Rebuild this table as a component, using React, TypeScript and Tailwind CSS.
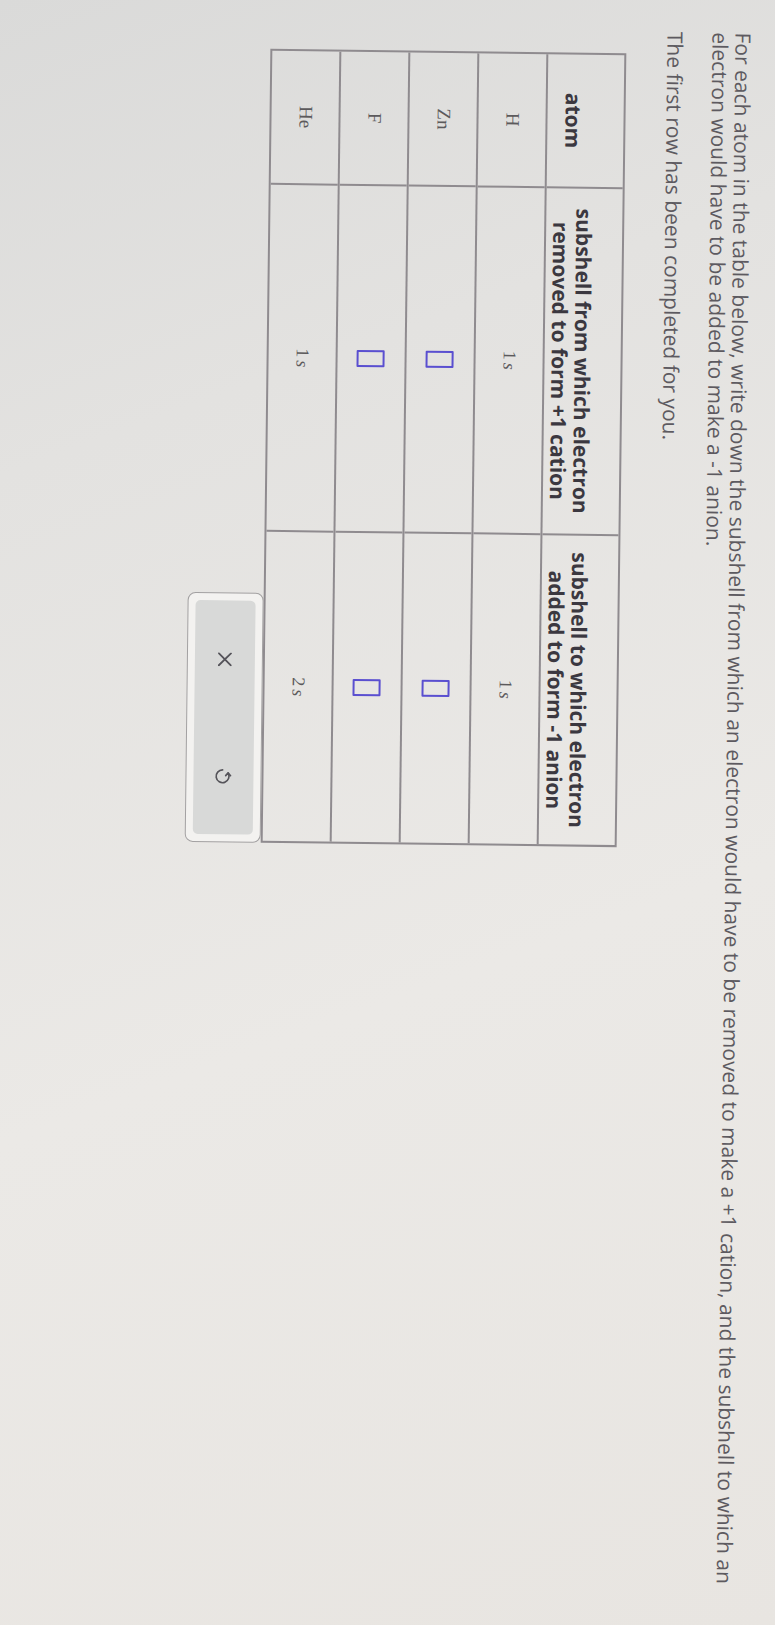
import React from "react";

type Cell = { kind: "orbital"; value: string } | { kind: "input" };

const ROWS: { atom: string; removed: Cell; added: Cell }[] = [
  { atom: "H", removed: { kind: "orbital", value: "1" }, added: { kind: "orbital", value: "1" } },
  { atom: "Zn", removed: { kind: "input" }, added: { kind: "input" } },
  { atom: "F", removed: { kind: "input" }, added: { kind: "input" } },
  { atom: "He", removed: { kind: "orbital", value: "1" }, added: { kind: "orbital", value: "2" } },
];

function AnswerCell({ cell }: { cell: Cell }) {
  if (cell.kind === "input") {
    return <div className="h-[28px] w-[17px] rounded-[1px] border-2 border-[#5a4fd0]" />;
  }
  return (
    <span className="font-['Liberation_Serif',serif] text-[18px] text-[#5c5a5c]">
      {cell.value}
      <span className="ml-[3px] italic">s</span>
    </span>
  );
}

function UndoIcon() {
  return (
    <svg width="22" height="22" viewBox="0 0 24 24" fill="none" stroke="#55545a" strokeWidth="1.8" strokeLinecap="round" strokeLinejoin="round">
      <path d="M5 13 A7 7 0 1 0 8.5 6.94" />
      <path d="M11.2 4.3 L8.2 7 L11.2 9.6" />
    </svg>
  );
}

function CloseIcon() {
  return (
    <svg width="14" height="14" viewBox="0 0 14 14" fill="none" stroke="#55545a" strokeWidth="1.8" strokeLinecap="round">
      <path d="M1 1 L13 13" />
      <path d="M13 1 L1 13" />
    </svg>
  );
}

export default function App() {
  return (
    <div className="h-[1625px] w-[775px] overflow-hidden bg-[linear-gradient(160deg,#dadad9_0%,#e3e2e0_25%,#ebe9e6_60%,#e8e5e1_100%)]">
      {/* the photo is turned a quarter turn clockwise */}
      <div className="h-[775px] w-[1625px] origin-top-left translate-x-[775px] rotate-[90.7deg] font-['Open_Sans',sans-serif] text-[#5d5a60]">
        <div className="pl-[33px] pt-[20px]">
          <p className="text-[21px] leading-[23px]">
            For each atom in the table below, write down the subshell from which an electron would have to be removed to make a +1 cation, and the subshell to which an
            <br />
            electron would have to be added to make a -1 anion.
          </p>
          <p className="mt-[22px] text-[21px] leading-[23px]">The first row has been completed for you.</p>

          <div className="ml-[22px] mt-[37px] w-[794px]">
            <div className="border-2 border-[#8f8b8f]">
              <div className="grid h-[78px] grid-cols-[134px_347px_1fr] border-b-2 border-[#8f8b8f] text-[21px] font-bold leading-[23px] text-[#3b3840]">
                <div className="flex items-center justify-center border-r-2 border-[#8f8b8f] pt-[26px] pb-[2px]">atom</div>
                <div className="flex items-center justify-center border-r-2 border-[#8f8b8f] pt-[26px] pb-[2px] text-center">
                  subshell from which electron
                  <br />
                  removed to form +1 cation
                </div>
                <div className="flex items-center justify-center pt-[26px] pb-[2px] text-center">
                  subshell to which electron
                  <br />
                  added to form -1 anion
                </div>
              </div>
              {ROWS.map((row, i) => (
                <div
                  key={row.atom}
                  className={`grid grid-cols-[134px_347px_1fr] ${i < ROWS.length - 1 ? "h-[69px] border-b-2 border-[#8f8b8f]" : "h-[67px]"}`}
                >
                  <div className="flex items-center justify-center border-r-2 border-[#8f8b8f] font-['Liberation_Serif',serif] text-[19px] text-[#5c5a5c]">
                    {row.atom}
                  </div>
                  <div className="flex items-center justify-center border-r-2 border-[#8f8b8f]">
                    <AnswerCell cell={row.removed} />
                  </div>
                  <div className="flex items-center justify-center">
                    <AnswerCell cell={row.added} />
                  </div>
                </div>
              ))}
            </div>

            <div className="flex justify-end">
              <div className="h-[76px] w-[250px] rounded-[8px] border-[1.5px] border-[#a3a1a2] bg-[#f3f2f0] p-[7px]">
                <div className="grid h-full grid-cols-2 place-items-center rounded-[5px] bg-[#d8d9d8]">
                  <CloseIcon />
                  <UndoIcon />
                </div>
              </div>
            </div>
          </div>
        </div>
      </div>
    </div>
  );
}
